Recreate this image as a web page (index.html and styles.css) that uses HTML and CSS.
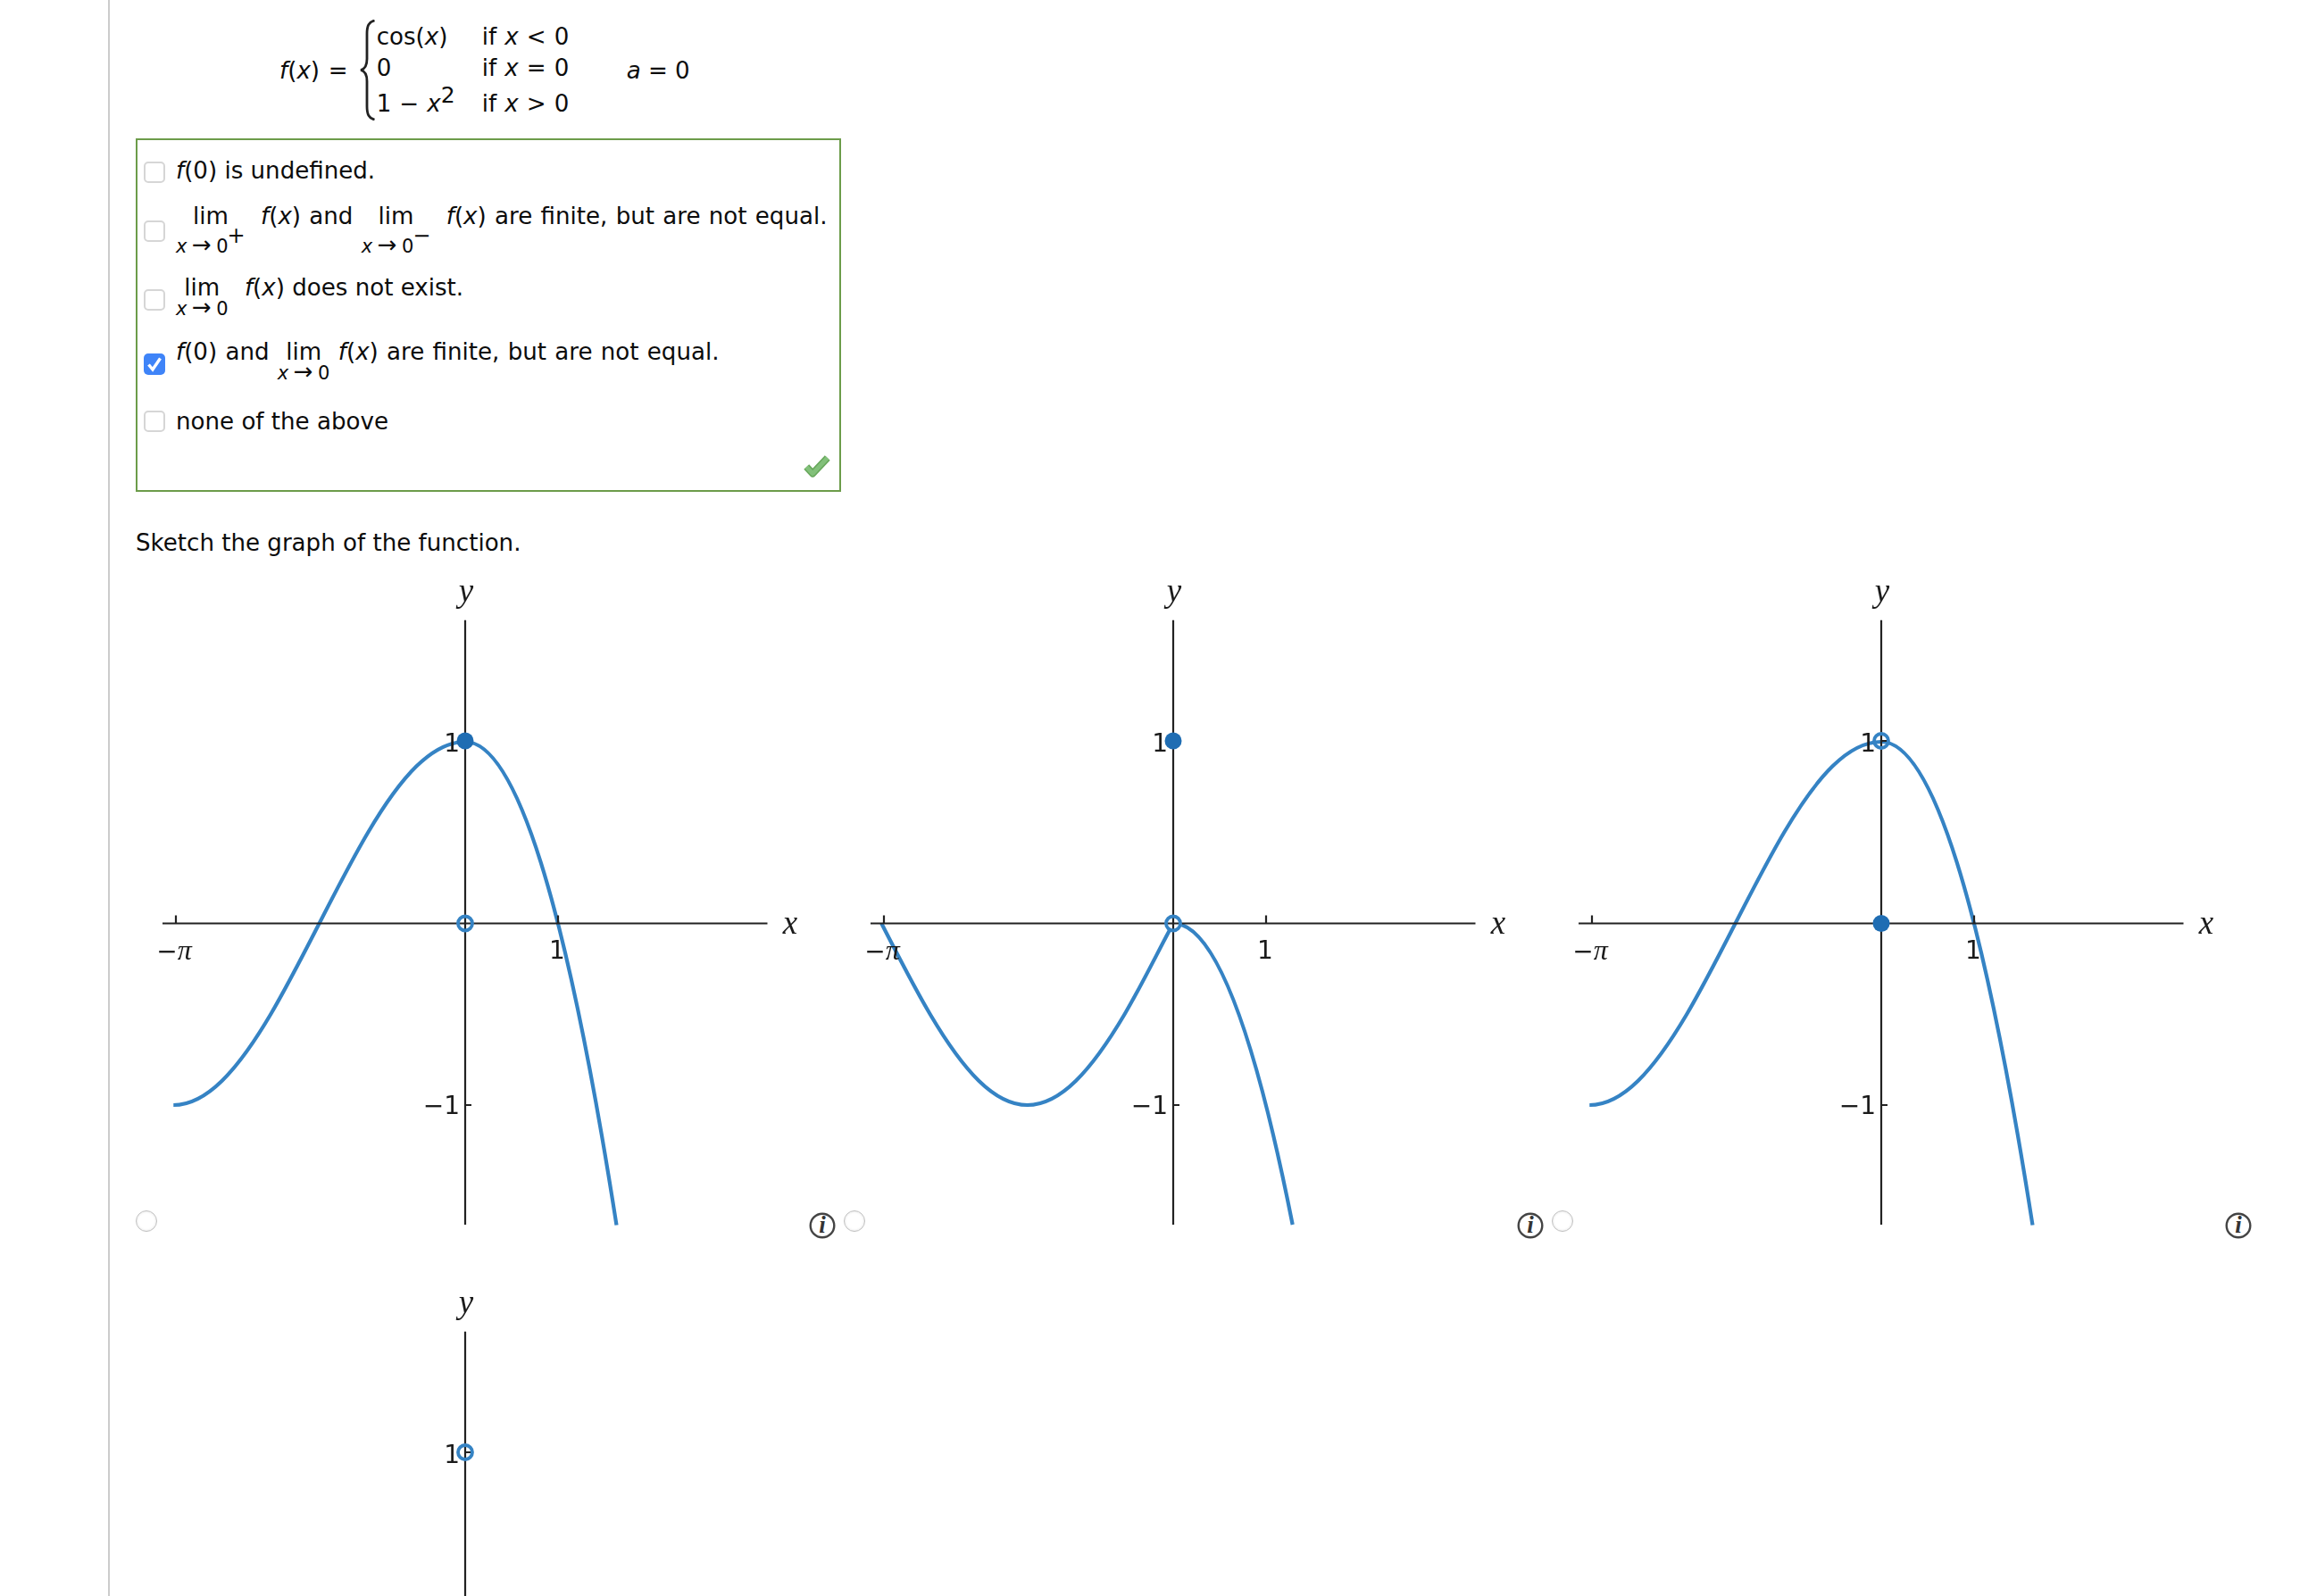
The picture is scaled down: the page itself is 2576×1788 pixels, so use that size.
FILE: index.html
```html
<!DOCTYPE html>
<html lang="en">
<head>
<meta charset="utf-8">
<title>Sketch the graph of the function</title>
<link rel="stylesheet" href="styles.css">
</head>
<body>
<main class="page">
  <div class="equation">
    <div class="eq-lhs"><i>f</i>(<i>x</i>) =</div>
    <svg class="brace" viewBox="0 0 17 113" aria-hidden="true"><path d="M16.500 1C10 2.500 8 7 8 16L8 44C8 52 5.500 55.500 1 56.500C5.500 57.500 8 61 8 69L8 97C8 106 10 110.500 16.500 112"/></svg>
    <div class="cases">
      <span>cos(<i>x</i>)</span><span>if <i>x</i> &lt; 0</span>
      <span>0</span><span>if <i>x</i> = 0</span>
      <span class="sq-row">1 &minus; <i>x</i><sup>2</sup></span><span>if <i>x</i> &gt; 0</span>
    </div>
    <div class="eq-point"><i>a</i> = 0</div>
  </div>

  <section class="answers">
    <div class="opt opt-1"><span class="cb"></span><div class="opt-text"><i>f</i>(0) is undefined.</div></div>
    <div class="opt opt-2"><span class="cb"></span><div class="opt-text"><span class="lim lim-gap lim-tall"><span>lim</span><span class="sub"><i>x</i><span class="arrow">→</span>0<span class="sup">+</span></span></span> <i>f</i>(<i>x</i>) and <span class="lim lim-gap lim-tall"><span>lim</span><span class="sub"><i>x</i><span class="arrow">→</span>0<span class="sup">&minus;</span></span></span> <i>f</i>(<i>x</i>) are finite, but are not equal.</div></div>
    <div class="opt opt-3"><span class="cb"></span><div class="opt-text"><span class="lim lim-gap"><span>lim</span><span class="sub"><i>x</i><span class="arrow">→</span>0</span></span> <i>f</i>(<i>x</i>) does not exist.</div></div>
    <div class="opt opt-4"><span class="cb cb-on"><svg viewBox="0 0 24 24" aria-hidden="true"><path d="M5.500 12.500L10 18L18.500 5.500"/></svg></span><div class="opt-text"><i>f</i>(0) and <span class="lim"><span>lim</span><span class="sub"><i>x</i><span class="arrow">→</span>0</span></span> <i>f</i>(<i>x</i>) are finite, but are not equal.</div></div>
    <div class="opt opt-5"><span class="cb"></span><div class="opt-text">none of the above</div></div>
    <svg class="correct" viewBox="0 0 30 26" aria-hidden="true"><path class="correct-edge" d="M4 14L10.500 21L26 4.500"/><path class="correct-fill" d="M4 14L10.500 21L26 4.500"/></svg>
  </section>

  <p class="prompt">Sketch the graph of the function.</p>

  <div class="graphs">
    <div class="graph-cell">
      <svg class="graph" viewBox="0 0 793 797">
        <path class="curve" d="M42.270 599C60.420 599 78.580 589.460 96.730 571.700C114.880 553.940 133.050 528.010 151.200 497.250C169.350 466.490 187.450 431.020 205.600 395.500C223.750 359.980 241.950 324.510 260.100 293.750C278.250 262.990 296.400 237.060 314.550 219.300C332.700 201.540 350.850 192 369 192"/>
        <path class="curve" d="M369 192Q453.800 192 538.500 733.500"/>
        <path class="axis" d="M30 395.500H707.500M369 55.700V733M45 386.500V395.500M473 386.500V395.500M369 191H376M369 599H376"/>
        <circle class="dot" cx="369" cy="191" r="9.500"/>
        <circle class="ring" cx="369" cy="395.500" r="8"/>
        <text class="var" x="370" y="35" text-anchor="middle">y</text>
        <text class="var" x="733" y="407" text-anchor="middle">x</text>
        <text class="tick" x="43" y="436" text-anchor="middle">&minus;<tspan class="pi">π</tspan></text>
        <text class="tick" x="472" y="435" text-anchor="middle">1</text>
        <text class="tick" x="363" y="203" text-anchor="end">1</text>
        <text class="tick" x="363" y="609" text-anchor="end">&minus;1</text>
      </svg>
      <span class="radio"></span>
      <svg class="info" viewBox="0 0 30 30" aria-hidden="true"><circle cx="15" cy="15" r="13.300"/><text x="15" y="23" text-anchor="middle">i</text></svg>
    </div>
    <div class="graph-cell">
      <svg class="graph" viewBox="0 0 793 797">
        <path class="curve" d="M42.270 395.500C60.420 431.020 78.580 466.490 96.730 497.250C114.880 528.010 133.050 553.940 151.200 571.700C169.350 589.460 187.450 599 205.600 599C223.750 599 241.950 589.460 260.100 571.700C278.250 553.940 296.400 528.010 314.550 497.250C332.700 466.490 350 431 365 403"/>
        <path class="curve" d="M378.400 397.100Q440.500 419 502.700 733"/>
        <path class="axis" d="M30 395.500H707.500M369 55.700V733M45 386.500V395.500M473 386.500V395.500M369 191H376M369 599H376"/>
        <circle class="dot" cx="369" cy="191" r="9.500"/>
        <circle class="ring" cx="369" cy="395.500" r="8"/>
        <text class="var" x="370" y="35" text-anchor="middle">y</text>
        <text class="var" x="733" y="407" text-anchor="middle">x</text>
        <text class="tick" x="43" y="436" text-anchor="middle">&minus;<tspan class="pi">π</tspan></text>
        <text class="tick" x="472" y="435" text-anchor="middle">1</text>
        <text class="tick" x="363" y="203" text-anchor="end">1</text>
        <text class="tick" x="363" y="609" text-anchor="end">&minus;1</text>
      </svg>
      <span class="radio"></span>
      <svg class="info" viewBox="0 0 30 30" aria-hidden="true"><circle cx="15" cy="15" r="13.300"/><text x="15" y="23" text-anchor="middle">i</text></svg>
    </div>
    <div class="graph-cell">
      <svg class="graph" viewBox="0 0 793 797">
        <path class="curve" d="M42.270 599C60.420 599 78.580 589.460 96.730 571.700C114.880 553.940 133.050 528.010 151.200 497.250C169.350 466.490 187.450 431.020 205.600 395.500C223.750 359.980 241.950 324.510 260.100 293.750C278.250 262.990 296.400 237.060 314.550 219.300C332.700 201.540 350.850 192 369 192"/>
        <path class="curve" d="M369 192Q453.800 192 538.500 733.500"/>
        <path class="axis" d="M30 395.500H707.500M369 55.700V733M45 386.500V395.500M473 386.500V395.500M369 191H376M369 599H376"/>
        <circle class="ring" cx="369" cy="191" r="8"/>
        <circle class="dot" cx="369" cy="395.500" r="9.500"/>
        <text class="var" x="370" y="35" text-anchor="middle">y</text>
        <text class="var" x="733" y="407" text-anchor="middle">x</text>
        <text class="tick" x="43" y="436" text-anchor="middle">&minus;<tspan class="pi">π</tspan></text>
        <text class="tick" x="472" y="435" text-anchor="middle">1</text>
        <text class="tick" x="363" y="203" text-anchor="end">1</text>
        <text class="tick" x="363" y="609" text-anchor="end">&minus;1</text>
      </svg>
      <span class="radio"></span>
      <svg class="info" viewBox="0 0 30 30" aria-hidden="true"><circle cx="15" cy="15" r="13.300"/><text x="15" y="23" text-anchor="middle">i</text></svg>
    </div>
    <div class="graph-cell">
      <svg class="graph" viewBox="0 0 793 797">
        <path class="axis" d="M369 55.700V733M369 191H376"/>
        <circle class="ring" cx="369" cy="191" r="8"/>
        <text class="var" x="370" y="35" text-anchor="middle">y</text>
        <text class="tick" x="363" y="203" text-anchor="end">1</text>
      </svg>
    </div>
  </div>
</main>
</body>
</html>
```
FILE: styles.css
```css
html, body {
  margin: 0;
  padding: 0;
  background: #fff;
}

.page {
  box-sizing: border-box;
  height: 1788px;
  margin-left: 121px;
  padding: 26px 0 0 29px;
  border-left: 2px solid #ccc;
  overflow: hidden;
  color: #0c0c0c;
  font-family: "DejaVu Sans", Verdana, sans-serif;
  font-size: 26.100px;
  line-height: 30px;
}

/* Piecewise definition */
.equation {
  display: flex;
  align-items: center;
  height: 105px;
  padding-left: 161px;
}

.eq-lhs {
  word-spacing: 1.500px;
  white-space: nowrap;
}

.brace {
  width: 17px;
  height: 113px;
  margin-left: 13px;
  flex: none;
}

.brace path {
  fill: none;
  stroke: #222;
  stroke-width: 2.800;
}

.cases {
  display: grid;
  grid-template-columns: 118px 96px;
  grid-template-rows: 35px 40px 30px;
  margin-left: 2px;
  word-spacing: 0.800px;
  white-space: nowrap;
}

.cases sup {
  font-size: 25px;
  line-height: 0;
}

.eq-point {
  margin-left: 66px;
  white-space: nowrap;
}

/* Answer options */
.answers {
  position: relative;
  box-sizing: border-box;
  width: 790px;
  height: 396px;
  margin-top: 24px;
  padding: 19px 0 0 7px;
  border: 2px solid #6c9c4a;
}

.opt {
  display: flex;
  align-items: flex-start;
  gap: 12px;
  white-space: nowrap;
}

.opt-1 { height: 30px; }
.opt-2 { height: 60px; margin-top: 21px; word-spacing: 1px; }
.opt-3 { height: 50px; margin-top: 20px; }
.opt-4 { height: 51px; margin-top: 22px; word-spacing: 1px; }
.opt-5 { height: 30px; margin-top: 27px; }

.cb {
  box-sizing: border-box;
  display: block;
  flex: none;
  width: 24px;
  height: 24px;
  border: 2px solid #d6d6d6;
  border-radius: 5px;
  background: #fff;
}

.opt-1 .cb { margin-top: 5px; }
.opt-2 .cb { margin-top: 20px; }
.opt-3 .cb { margin-top: 17px; }
.opt-4 .cb { margin-top: 17px; }
.opt-5 .cb { margin-top: 3px; }

.cb-on {
  border: 0;
  background: #3f84f8;
}

.cb-on svg {
  display: block;
  width: 24px;
  height: 24px;
}

.cb-on path {
  fill: none;
  stroke: #fff;
  stroke-width: 3.400;
}

.lim {
  display: inline-flex;
  flex-direction: column;
  align-items: center;
  vertical-align: top;
}

.lim-gap {
  margin-right: 10px;
}

.lim-tall {
  margin-right: 8px;
}

.sub {
  margin-top: -3px;
  font-size: 21px;
  line-height: 24px;
}

.lim-tall .sub {
  margin-top: 7px;
}

.arrow {
  margin: 0 5.500px;
  font-size: 26px;
  line-height: 0;
}

.sup {
  position: relative;
  top: -11px;
  margin-left: -1px;
  font-size: 24px;
  line-height: 0;
}

.correct {
  position: absolute;
  right: 9px;
  bottom: 13px;
  width: 32px;
  height: 28px;
}

.correct path {
  fill: none;
  stroke-linejoin: round;
}

.correct-edge {
  stroke: #68a85c;
  stroke-width: 7.500;
}

.correct-fill {
  stroke: #82c07a;
  stroke-width: 4.500;
}

.prompt {
  margin: 42px 0 16px;
}

/* Graph choices */
.graphs {
  display: grid;
  grid-template-columns: repeat(3, 793px);
  grid-auto-rows: 797px;
}

.graph-cell {
  position: relative;
}

.graph {
  display: block;
  width: 793px;
  height: 797px;
  overflow: visible;
  filter: blur(0.5px);
}

.curve {
  fill: none;
  stroke: #3583c4;
  stroke-width: 4.200;
}

.axis {
  fill: none;
  stroke: #222;
  stroke-width: 2.200;
}

.dot {
  fill: #1f6db3;
}

.ring {
  fill: none;
  stroke: #3583c4;
  stroke-width: 3.800;
}

.var {
  font-family: "Liberation Serif", serif;
  font-size: 37px;
  font-style: italic;
  fill: #1a1a1a;
}

.tick {
  font-family: "DejaVu Sans", sans-serif;
  font-size: 28px;
  fill: #1a1a1a;
}

.pi {
  font-family: "Liberation Serif", serif;
  font-size: 32px;
  font-style: italic;
}

.radio {
  position: absolute;
  left: 0;
  top: 717px;
  box-sizing: border-box;
  width: 24px;
  height: 24px;
  border: 1px solid #c0c0c0;
  border-radius: 50%;
  background: #fff;
  box-shadow: inset 0 0 3px #ddd;
}

.info {
  position: absolute;
  left: 754px;
  top: 719px;
  width: 30px;
  height: 30px;
}

.info circle {
  fill: #fff;
  stroke: #444;
  stroke-width: 2.400;
}

.info text {
  font-family: "Liberation Serif", serif;
  font-size: 27px;
  font-style: italic;
  font-weight: bold;
  fill: #333;
}
```
